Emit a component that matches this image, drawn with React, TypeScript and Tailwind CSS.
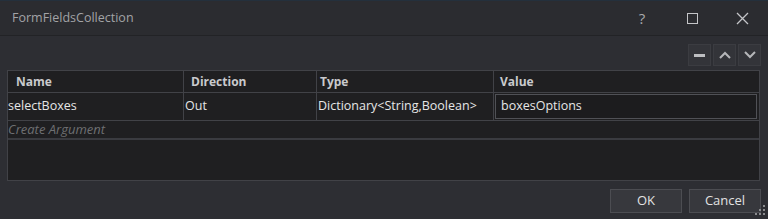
import React from "react";

const font = { fontFamily: '"Open Sans", "Noto Sans", sans-serif' };

export default function App() {
  return (
    <div
      style={font}
      className="flex h-[219px] w-[768px] flex-col overflow-hidden border-t border-[#24303c] bg-[#2d2e33] text-[12px] text-[#dcdcdc]"
    >
      {/* title bar */}
      <div className="flex h-[35px] shrink-0 items-center border-b border-[#222326] bg-[#2b2c30] pl-[12px]">
        <span className="text-[12.5px] text-[#a2a3a6]">FormFieldsCollection</span>
        <div className="ml-auto flex h-full items-center">
          <span className="w-[48px] text-center text-[15px] text-[#a9aaad]">?</span>
          <div className="flex w-[52px] justify-center">
            <div className="h-[11px] w-[11px] border-[1.5px] border-[#c4c5c8]" />
          </div>
          <div className="flex w-[50px] justify-center pr-[2px]">
            <svg width="13" height="13" viewBox="0 0 13 13">
              <path d="M1 1 L12 12 M12 1 L1 12" stroke="#c4c5c8" strokeWidth="1.3" />
            </svg>
          </div>
        </div>
      </div>

      {/* toolbar */}
      <div className="flex h-[34px] shrink-0 justify-end gap-[2px] pr-[7px] pt-[8px]">
        <ToolButton>
          <div className="h-[3px] w-[11px] bg-[#bdbec1]" />
        </ToolButton>
        <ToolButton>
          <svg width="12" height="8" viewBox="0 0 12 8">
            <path d="M1 7 L6 2 L11 7" fill="none" stroke="#b5b6b9" strokeWidth="2" />
          </svg>
        </ToolButton>
        <ToolButton>
          <svg width="12" height="8" viewBox="0 0 12 8">
            <path d="M1 1 L6 6 L11 1" fill="none" stroke="#b5b6b9" strokeWidth="2" />
          </svg>
        </ToolButton>
      </div>

      {/* grid */}
      <div className="ml-[7px] flex h-[111px] w-[753px] shrink-0 flex-col border border-[#414247] bg-[#1f1f21]">
        <div className="flex h-[22px] shrink-0 items-center border-b border-[#414247] font-bold text-[#c9cacd]">
          <div className="flex h-full w-[176px] items-center border-r border-[#414247] pl-[8px]">Name</div>
          <div className="flex h-full w-[133px] items-center border-r border-[#414247] pl-[7px]">Direction</div>
          <div className="flex h-full w-[177px] items-center border-r border-[#414247] pl-[3px]">Type</div>
          <div className="flex h-full flex-1 items-center pl-[6px]">Value</div>
        </div>
        <div className="flex h-[28px] shrink-0 items-center border-b border-[#414247] text-[12.5px] text-[#e6e6e6]">
          <div className="flex h-full w-[176px] items-center border-r border-[#414247]">selectBoxes</div>
          <div className="flex h-full w-[133px] items-center border-r border-[#414247] pl-[1px]">Out</div>
          <div className="flex h-full w-[177px] items-center border-r border-[#414247] pl-[1px]">
            Dictionary&lt;String,Boolean&gt;
          </div>
          <div className="flex h-full flex-1 items-center py-[1px] pl-[1px] pr-[2px]">
            <div className="flex h-full w-full items-center border border-[#505156] bg-[#1c1c1e] pl-[5px]">
              boxesOptions
            </div>
          </div>
        </div>
        <div className="flex h-[19px] shrink-0 items-center border-b-2 border-[#3a3b40] text-[13px] italic text-[#6e6f72]">
          Create Argument
        </div>
        <div className="flex-1" />
      </div>

      {/* footer */}
      <div className="relative flex flex-1 items-start justify-end gap-[7px] pr-[7px] pt-[8px]">
        <button className="h-[24px] w-[72px] border border-[#4c4d52] bg-[#37383d] text-[13px] text-[#e2e2e2]">
          OK
        </button>
        <button className="h-[24px] w-[72px] border border-[#4c4d52] bg-[#37383d] text-[13px] text-[#e2e2e2]">
          Cancel
        </button>
        <svg className="absolute bottom-[3px] right-[2px]" width="11" height="11" viewBox="0 0 11 11">
          <rect x="8" y="0" width="2" height="2" fill="#8a8b8e" />
          <rect x="4" y="4" width="2" height="2" fill="#8a8b8e" />
          <rect x="8" y="4" width="2" height="2" fill="#8a8b8e" />
          <rect x="0" y="8" width="2" height="2" fill="#8a8b8e" />
          <rect x="4" y="8" width="2" height="2" fill="#8a8b8e" />
          <rect x="8" y="8" width="2" height="2" fill="#8a8b8e" />
        </svg>
      </div>
    </div>
  );
}

function ToolButton({ children }: { children: React.ReactNode }) {
  return (
    <div className="flex h-[22px] w-[23px] items-center justify-center border border-[#3b3c41] bg-[#333439]">
      {children}
    </div>
  );
}
